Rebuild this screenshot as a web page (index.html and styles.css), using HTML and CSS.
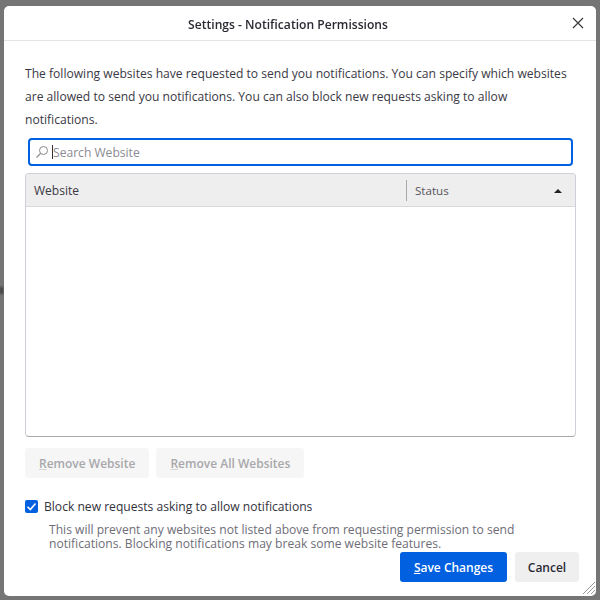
FILE: index.html
```html
<!DOCTYPE html>
<html lang="en">
<head>
<meta charset="utf-8">
<title>Settings - Notification Permissions</title>
<link rel="stylesheet" href="styles.css">
</head>
<body>
<span class="behind"></span>
<div class="dialog">
  <header class="title-bar">
    <h1 class="title">Settings - Notification Permissions</h1>
    <svg class="close" width="12" height="12" viewBox="0 0 12 12"><path d="M1 1l10 10M11 1L1 11" stroke="#3a3a3a" stroke-width="1.2" fill="none"/></svg>
  </header>
  <main class="content">
    <p class="intro">The following websites have requested to send you notifications. You can specify which websites are allowed to send you notifications. You can also block new requests asking to allow notifications.</p>
    <div class="search">
      <svg class="search-icon" width="14" height="14" viewBox="0 0 14 14"><circle cx="8.5" cy="5.5" r="4" stroke="#8a8a8a" stroke-width="1" fill="none"/><path d="M5.5 8.5L1.5 12.5" stroke="#8a8a8a" stroke-width="1.1"/></svg>
      <span class="caret"></span>
      <span class="placeholder">Search Website</span>
    </div>
    <div class="table">
      <div class="table-head">
        <span class="col-site">Website</span>
        <span class="col-status">Status</span>
        <span class="sort"></span>
      </div>
    </div>
    <div class="row-actions">
      <span class="btn disabled"><u>R</u>emove Website</span>
      <span class="btn disabled"><u>R</u>emove All Websites</span>
    </div>
    <label class="check-row">
      <span class="checkbox"><svg width="13" height="13" viewBox="0 0 13 13"><path d="M2.5 6.8l2.8 2.8 5.2-6" stroke="#fff" stroke-width="1.5" fill="none"/></svg></span>
      <span class="check-label">Block new requests asking to allow notifications</span>
    </label>
    <p class="desc">This will prevent any websites not listed above from requesting permission to send notifications. Blocking notifications may break some website features.</p>
    <div class="footer">
      <span class="btn primary"><u>S</u>ave Changes</span>
      <span class="btn secondary">Cancel</span>
    </div>
  </main>
  <svg class="grip" width="14" height="14" viewBox="0 0 14 14"><path d="M1 13L13 1M5 13L13 5M9 13L13 9" stroke="#9a9a9a" stroke-width="1"/></svg>
</div>
</body>
</html>
```
FILE: styles.css
```css
* { box-sizing: border-box; }
html, body { margin: 0; height: 100%; }
body {
  position: relative;
  background: #757575;
  padding: 6px 4px 4px 4px;
  font-family: "Open Sans", "Noto Sans", sans-serif;
  color: #2b2a33;
  font-size: 12.1px;
  overflow: hidden;
}
.behind {
  position: absolute;
  left: 0;
  top: 287px;
  width: 3px;
  height: 7px;
  background: #3c3c3c;
  filter: blur(1px);
}
.dialog {
  position: relative;
  height: 590px;
  background: #fff;
  border-radius: 5px;
  filter: blur(0.45px);
}
.title-bar {
  height: 35px;
  border-bottom: 1px solid #e4e4e6;
  display: flex;
  align-items: center;
  justify-content: center;
  padding: 2px 24px 0 0;
  position: relative;
}
.title { margin: 0; font-size: 12.1px; font-weight: 600; color: #2b2a33; }
.close { position: absolute; right: 12px; top: 11px; }
.content { padding: 21px 20px 0 21px; }
.intro { margin: 0; line-height: 23px; color: #3a3944; width: 546px; }
.search {
  margin: 7px 0 0 3px;
  width: 545px;
  height: 28px;
  border: 2px solid #0060df;
  border-radius: 4px;
  display: flex;
  align-items: center;
  padding-left: 5px;
}
.search-icon { flex: none; }
.caret { width: 1px; height: 14px; background: #333; margin-left: 3px; }
.placeholder { color: #8a8a90; }
.table {
  margin-top: 7px;
  width: 551px;
  height: 264px;
  border: 1px solid #cfcfd8;
  border-bottom-color: #a8a8a8;
  border-radius: 4px;
  overflow: hidden;
}
.table-head {
  height: 33px;
  background: #eeeeee;
  border-bottom: 1px solid #d8d8d8;
  display: flex;
  align-items: center;
  position: relative;
}
.col-site { width: 380px; padding-left: 8px; color: #3a3944; font-weight: 500; font-size: 12px; }
.col-status { padding-left: 8px; border-left: 1px solid #a8a8a8; height: 21px; line-height: 21px; color: #55545c; font-size: 11.6px; font-weight: 500; }
.sort {
  position: absolute; right: 13px; top: 15px;
  border-left: 4px solid transparent;
  border-right: 4px solid transparent;
  border-bottom: 4px solid #222;
}
.btn {
  display: inline-flex;
  align-items: center;
  justify-content: center;
  height: 30px;
  border-radius: 3px;
  font-size: 12px;
  font-weight: 600;
  white-space: pre;
}
.disabled { background: #f6f6f6; color: #a8a8ac; padding: 0 14px; }
.disabled u { text-decoration-color: #d4d4d6; }
.row-actions { margin-top: 11px; display: flex; gap: 7px; }
.check-row { margin-top: 21px; display: flex; align-items: center; gap: 6px; height: 14px; }
.checkbox {
  width: 13px; height: 13px; background: #0060df; border-radius: 2px; display: block; line-height: 0;
}
.check-label { color: #33323b; }
.desc { margin: 10px 0 0 24px; width: 500px; line-height: 14px; color: #6e6d78; }
.footer { margin-top: 1px; display: flex; justify-content: flex-end; gap: 8px; margin-right: -3px; }
.primary { background: #0060df; color: #fff; padding: 0 13px; width: 107px; }
.secondary { background: #efeff0; color: #2b2a33; width: 64px; }
.grip { position: absolute; right: 0; bottom: 1px; }
```
